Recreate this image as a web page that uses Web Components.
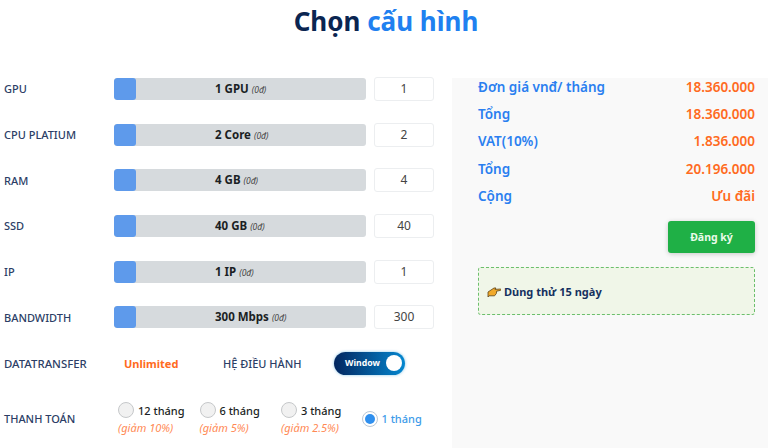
<!DOCTYPE html>
<html lang="vi">
<head>
<meta charset="utf-8">
<title>Chọn cấu hình</title>
<style>
    html, body { margin: 0; padding: 0; background: #fff; overflow: hidden; }
    body { font-family: "Noto Sans", "Open Sans", sans-serif; width: 768px; height: 448px; }
</style>
</head>
<body>
<config-page>
    <section-title slot="title"></section-title>

    <slider-row slot="left" label="GPU" value="1 GPU" amount="1"></slider-row>
    <slider-row slot="left" label="CPU PLATIUM" value="2 Core" amount="2"></slider-row>
    <slider-row slot="left" label="RAM" value="4 GB" amount="4"></slider-row>
    <slider-row slot="left" label="SSD" value="40 GB" amount="40"></slider-row>
    <slider-row slot="left" label="IP" value="1 IP" amount="1"></slider-row>
    <slider-row slot="left" label="BANDWIDTH" value="300 Mbps" amount="300"></slider-row>
    <transfer-row slot="left"></transfer-row>
    <payment-row slot="left"></payment-row>

    <summary-panel slot="right">
        <price-line label="Đơn giá vnđ/ tháng" value="18.360.000"></price-line>
        <price-line label="Tổng" value="18.360.000"></price-line>
        <price-line label="VAT(10%)" value="1.836.000"></price-line>
        <price-line label="Tổng" value="20.196.000"></price-line>
        <price-line label="Cộng" value="Ưu đãi"></price-line>
    </summary-panel>
</config-page>

<script>
    class ConfigPage extends HTMLElement {
        constructor() {
            super();
            this.attachShadow({ mode: 'open' });
            this.shadowRoot.innerHTML = `
                <style>
                    :host { display: block; width: 768px; height: 448px; overflow: hidden; }
                    .columns { display: flex; height: 382px; }
                    .left { width: 452px; flex: none; box-sizing: border-box; padding: 0 0 0 4px; }
                    .right { flex: 1; padding-top: 12px; }
                </style>
                <slot name="title"></slot>
                <div class="columns">
                    <div class="left"><slot name="left"></slot></div>
                    <div class="right"><slot name="right"></slot></div>
                </div>`;
        }
    }

    class SectionTitle extends HTMLElement {
        constructor() {
            super();
            this.attachShadow({ mode: 'open' });
            this.shadowRoot.innerHTML = `
                <style>
                    :host { display: block; height: 66px; box-sizing: border-box; padding: 3px 0 0 4px; text-align: center; }
                    h2 { margin: 0; font-size: 26px; line-height: 36px; font-weight: 700; color: #0a2551; }
                    span { color: #2080f0; }
                </style>
                <h2>Chọn <span>cấu hình</span></h2>`;
        }
    }

    class SliderRow extends HTMLElement {
        constructor() {
            super();
            this.attachShadow({ mode: 'open' });
            this.shadowRoot.innerHTML = `
                <style>
                    :host { display: flex; align-items: center; height: 45.7px; }
                    .label { width: 110px; flex: none; font-size: 11px; font-weight: 500; color: #2c3e66; }
                    .track { width: 252px; height: 22px; flex: none; display: flex; background: #d6dadd; border-radius: 3px; overflow: hidden; }
                    .thumb { width: 22px; flex: none; background: #5e9aeb; border-radius: 3px; }
                    .text { flex: 1; padding-left: 79px; font-size: 11.5px; line-height: 22px; font-weight: 700; color: #1b1f24; white-space: nowrap; }
                    .text i { font-size: 8.5px; font-weight: 400; color: #444; }
                    .amount { width: 60px; height: 24px; flex: none; margin-left: 8px; box-sizing: border-box; border: 1px solid #eceef0; border-radius: 3px; background: #fff; text-align: center; font-size: 12px; line-height: 22px; color: #444; }
                </style>
                <div class="label"></div>
                <div class="track"><div class="thumb"></div><div class="text"><span class="v"></span> <i>(0đ)</i></div></div>
                <div class="amount"></div>`;
        }

        connectedCallback() {
            this.shadowRoot.querySelector('.label').textContent = this.getAttribute('label');
            this.shadowRoot.querySelector('.v').textContent = this.getAttribute('value');
            this.shadowRoot.querySelector('.amount').textContent = this.getAttribute('amount');
        }
    }

    class TransferRow extends HTMLElement {
        constructor() {
            super();
            this.attachShadow({ mode: 'open' });
            this.shadowRoot.innerHTML = `
                <style>
                    :host { display: flex; align-items: center; height: 46px; font-size: 11px; font-weight: 500; color: #2c3e66; }
                    .label { width: 120px; flex: none; font-size: 11.4px; }
                    .unlimited { width: 99px; flex: none; font-weight: 700; color: #ff6a20; }
                    .os { width: 111px; flex: none; font-weight: 500; }
                    .toggle { width: 71px; height: 23px; box-sizing: border-box; padding: 0 3px 0 11px; display: flex; align-items: center; justify-content: space-between; border-radius: 12px; background: linear-gradient(90deg, #03265f, #0487d0); box-shadow: 0 0 3px rgba(4,135,208,.5); color: #fff; font-size: 8.7px; font-weight: 700; }
                    .knob { width: 16px; height: 16px; border-radius: 50%; background: #fff; }
                </style>
                <div class="label">DATATRANSFER</div>
                <div class="unlimited">Unlimited</div>
                <div class="os">HỆ ĐIỀU HÀNH</div>
                <div class="toggle"><span>Window</span><span class="knob"></span></div>`;
        }
    }

    class PaymentRow extends HTMLElement {
        constructor() {
            super();
            this.attachShadow({ mode: 'open' });
            this.shadowRoot.innerHTML = `
                <style>
                    :host { display: flex; align-items: center; height: 46px; margin-top: 9px; font-size: 11px; color: #1b1f24; }
                    .label { width: 114px; flex: none; font-weight: 500; color: #2c3e66; }
                    .opt { width: 81.5px; flex: none; }
                    .top { display: flex; align-items: center; gap: 4px; font-weight: 500; height: 19px; }
                    .radio { width: 16px; height: 16px; box-sizing: border-box; border: 1px solid #c6c8ca; border-radius: 50%; background: #f1f1f1; flex: none; }
                    .off { font-size: 11px; font-style: italic; color: #ff8a55; line-height: 16px; }
                    .on { display: flex; align-items: center; gap: 4px; color: #3d9be9; font-size: 11px; font-weight: 500; margin: 1px 0 0 -1px; }
                    .on .radio { background: #fff; border-color: #b9c6d4; display: flex; align-items: center; justify-content: center; }
                    .on .radio::after { content: ""; width: 10px; height: 10px; border-radius: 50%; background: #2f8fee; }
                </style>
                <div class="label">THANH TOÁN</div>
                <div class="opt"><div class="top"><span class="radio"></span>12 tháng</div><div class="off">(giảm 10%)</div></div>
                <div class="opt"><div class="top"><span class="radio"></span>6 tháng</div><div class="off">(giảm 5%)</div></div>
                <div class="opt"><div class="top"><span class="radio"></span>3 tháng</div><div class="off">(giảm 2.5%)</div></div>
                <div class="on"><span class="radio"></span>1 tháng</div>`;
        }
    }

    class PriceLine extends HTMLElement {
        constructor() {
            super();
            this.attachShadow({ mode: 'open' });
            this.shadowRoot.innerHTML = `
                <style>
                    :host { display: flex; justify-content: space-between; align-items: center; height: 27.3px; font-size: 13.5px; font-weight: 600; color: #2a7ff0; }
                    .v { color: #ff6a20; }
                </style>
                <span class="l"></span><span class="v"></span>`;
        }

        connectedCallback() {
            this.shadowRoot.querySelector('.l').textContent = this.getAttribute('label');
            this.shadowRoot.querySelector('.v').textContent = this.getAttribute('value');
        }
    }

    class SummaryPanel extends HTMLElement {
        constructor() {
            super();
            this.attachShadow({ mode: 'open' });
            this.shadowRoot.innerHTML = `
                <style>
                    :host { display: flow-root; height: 370px; box-sizing: border-box; padding: 0 13px 0 26px; background: #f9f9f9; }
                    .lines { margin-top: -5px; }
                    .actions { display: flex; justify-content: flex-end; margin-top: 12px; }
                    button { width: 87px; height: 32px; border: 0; border-radius: 3px; background: #1fb046; box-shadow: 0 1px 5px rgba(0,0,0,.2); color: #eafbea; font: 700 10.5px "Noto Sans", sans-serif; }
                    .trial { height: 48px; margin-top: 14px; box-sizing: border-box; padding-left: 8px; display: flex; align-items: center; gap: 3px; border: 1px dashed #6cbf6c; border-radius: 3px; background: #f0f6e8; color: #15305f; font-size: 11px; font-weight: 700; }
                    svg { flex: none; margin-top: 3px; }
                </style>
                <div class="lines"><slot></slot></div>
                <div class="actions"><button>Đăng ký</button></div>
                <div class="trial">
                    <svg width="14" height="11" viewBox="0 0 14 11"><path d="M1 5 4 3 7 1h2l-1 1.4 5.4-.4c.8.2.8 1.2 0 1.4L9.6 4.2 9.4 6.4 7.6 8.8H2L1 10z" fill="#f0a92a" stroke="#5a4216" stroke-width=".8" stroke-linejoin="round"/></svg>
                    Dùng thử 15 ngày
                </div>`;
        }
    }

    customElements.define('config-page', ConfigPage);
    customElements.define('section-title', SectionTitle);
    customElements.define('slider-row', SliderRow);
    customElements.define('transfer-row', TransferRow);
    customElements.define('payment-row', PaymentRow);
    customElements.define('price-line', PriceLine);
    customElements.define('summary-panel', SummaryPanel);
</script>
</body>
</html>
